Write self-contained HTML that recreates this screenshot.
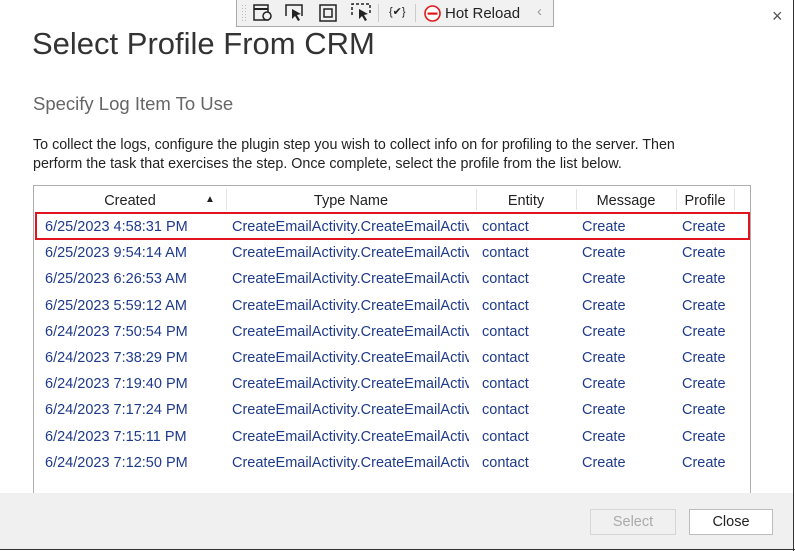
<!DOCTYPE html>
<html><head><style>
body{margin:0;width:795px;height:551px;background:#fff;position:relative;overflow:hidden;font-family:"Liberation Sans",sans-serif;}
.a{position:absolute;}
.t{color:#222;font-size:14px;}
.row{position:absolute;left:34px;width:716px;height:26px;font-size:14.5px;color:#1e3a8a;}
.row span{position:absolute;top:6px;white-space:nowrap;overflow:hidden;}
.hd span{position:absolute;top:7px;font-size:14.5px;color:#222;text-align:center;}
.sep{position:absolute;top:3px;width:1px;height:21px;background:#e3e3e3;}
</style></head><body>
<div class="a" style="right:1px;top:0;width:1px;height:551px;background:#333"></div>
<div class="a" style="left:0;bottom:1px;width:795px;height:1px;background:#333"></div>
<div class="a" style="left:772px;top:6px;font-size:18px;color:#555">×</div>
<div class="a" style="left:32px;top:26px;font-size:31px;color:#333">Select Profile From CRM</div>
<div class="a" style="left:33px;top:93px;font-size:18.5px;color:#666">Specify Log Item To Use</div>
<div class="a t" style="left:33px;top:136px;line-height:19px;font-size:14.3px">To collect the logs, configure the plugin step you wish to collect info on for profiling to the server. Then<br>perform the task that exercises the step. Once complete, select the profile from the list below.</div>
<div class="a" style="left:33px;top:185px;width:716px;height:320px;border:1px solid #adadad"></div>
<div class="a hd" style="left:34px;top:186px;width:716px;height:26px">
<span style="left:0;width:192px">Created</span><span style="left:171px;top:8px;font-size:10px">▲</span>
<div class="sep" style="left:192px"></div>
<span style="left:192px;width:250px">Type Name</span><div class="sep" style="left:442px"></div>
<span style="left:442px;width:100px">Entity</span><div class="sep" style="left:542px"></div>
<span style="left:542px;width:100px">Message</span><div class="sep" style="left:642px"></div>
<span style="left:642px;width:58px">Profile</span><div class="sep" style="left:700px"></div>
</div>
<div class="a" style="left:35px;top:212px;width:711px;height:24px;border:2px solid #e0141e"></div>
<div id="rows"></div>
<div class="a" style="left:0;top:493px;width:793px;height:56px;background:#f0f0f0"></div>
<div class="a" style="left:590px;top:509px;width:84px;height:24px;border:1px solid #d6d6d6;background:#f0f0f0;color:#aaa;font-size:14.5px;text-align:center;line-height:24px">Select</div>
<div class="a" style="left:689px;top:509px;width:82px;height:24px;border:1px solid #bdbdbd;background:#fff;color:#222;font-size:14.5px;text-align:center;line-height:24px">Close</div>
<div class="a" style="left:236px;top:0;width:316px;height:26px;background:#f1f1f1;border:1px solid #aaa;border-top:none;font-size:15px;color:#222">
<div class="a" style="left:4px;top:4px;width:5px;height:18px;background-image:radial-gradient(#bbb 30%,transparent 35%);background-size:3px 3px"></div>
<svg class="a" style="left:16px;top:4px" width="20" height="18"><rect x="1" y="1" width="14" height="15" fill="none" stroke="#222" stroke-width="1.5"/><line x1="1" y1="5" x2="15" y2="5" stroke="#222" stroke-width="2"/><circle cx="14" cy="12" r="4" fill="#f1f1f1" stroke="#222" stroke-width="1.5"/></svg>
<svg class="a" style="left:48px;top:4px" width="20" height="18"><path d="M1 12V1h16v11" fill="none" stroke="#222" stroke-width="1.5"/><path d="M7 5l9 5-4 1 3 5-2 1-3-5-3 3z" fill="#222"/></svg>
<svg class="a" style="left:82px;top:4px" width="20" height="18"><rect x="1" y="1" width="16" height="16" fill="none" stroke="#222" stroke-width="1.5"/><rect x="5" y="5" width="8" height="8" fill="none" stroke="#222" stroke-width="1.5"/></svg>
<svg class="a" style="left:114px;top:3px" width="22" height="20"><path d="M1 12V1h18v11" fill="none" stroke="#222" stroke-width="1.5" stroke-dasharray="3 2"/><path d="M8 6l9 5-4 1 3 5-2 1-3-5-3 3z" fill="#222"/></svg>
<div class="a" style="left:141px;top:4px;width:1px;height:18px;background:#ccc"></div>
<div class="a" style="left:152px;top:5px;font-size:11px">{✔}</div>
<div class="a" style="left:178px;top:4px;width:1px;height:18px;background:#ccc"></div>
<svg class="a" style="left:187px;top:5px" width="18" height="18"><circle cx="8.5" cy="8.5" r="7.5" fill="#fff" stroke="#e01818" stroke-width="1.6"/><rect x="3.5" y="7.5" width="10" height="2.2" fill="#e01818"/></svg>
<div class="a" style="left:208px;top:5px">Hot Reload</div>
<div class="a" style="left:300px;top:3px;color:#999">‹</div>
</div>
<script>
var d=["6/25/2023 4:58:31 PM","6/25/2023 9:54:14 AM","6/25/2023 6:26:53 AM","6/25/2023 5:59:12 AM","6/24/2023 7:50:54 PM","6/24/2023 7:38:29 PM","6/24/2023 7:19:40 PM","6/24/2023 7:17:24 PM","6/24/2023 7:15:11 PM","6/24/2023 7:12:50 PM"];
var h="";d.forEach(function(s,i){var y=213+i*26.2;
h+='<div class="row" style="top:'+y+'px"><span style="left:11px">'+s+'</span><span style="left:198px;width:237px">CreateEmailActivity.CreateEmailActivity</span><span style="left:448px">contact</span><span style="left:548px">Create</span><span style="left:648px">Create</span></div>';});
document.getElementById("rows").innerHTML=h;
</script>
</body></html>
